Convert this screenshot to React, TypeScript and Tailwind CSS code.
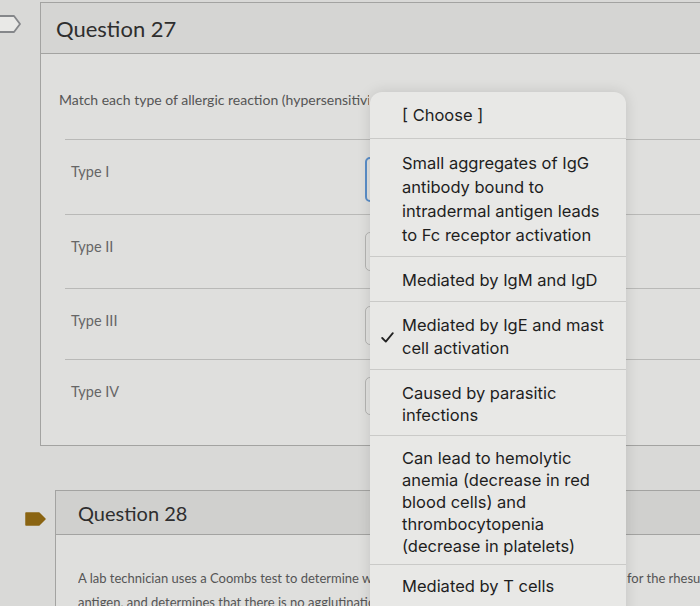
const rows = [
  { label: 'Type I', row: 'h-[75px] border-b', sel: 'h-[45px] border-2 border-[#5a8ec8]' },
  { label: 'Type II', row: 'h-[74px] border-b', sel: 'h-[39px] border border-[#b4b4b2]' },
  { label: 'Type III', row: 'h-[71px] border-b', sel: 'h-[39px] border border-[#b4b4b2]' },
  { label: 'Type IV', row: 'h-[85px]', sel: 'h-[38px] border border-[#b4b4b2]' },
]

const options = [
  { lines: ['[ Choose ]'], cls: 'pt-[12px] pb-[11px] leading-[23px] border-b' },
  {
    lines: ['Small aggregates of IgG', 'antibody bound to', 'intradermal antigen leads', 'to Fc receptor activation'],
    cls: 'pt-[12px] pb-[9px] leading-[24px] border-b',
  },
  { lines: ['Mediated by IgM and IgD'], cls: 'pt-[12px] pb-[9px] leading-[23px] border-b' },
  { lines: ['Mediated by IgE and mast', 'cell activation'], cls: 'pt-[12px] pb-[9px] leading-[23px] border-b', checked: true },
  { lines: ['Caused by parasitic', 'infections'], cls: 'pt-[12px] pb-[9px] leading-[22px] border-b' },
  {
    lines: ['Can lead to hemolytic', 'anemia (decrease in red', 'blood cells) and', 'thrombocytopenia', '(decrease in platelets)'],
    cls: 'pt-[11px] pb-[7px] leading-[22px] border-b',
  },
  { lines: ['Mediated by T cells'], cls: 'pt-[10px] pb-[10px] leading-[22px]' },
]

function Check() {
  return (
    <svg width="13" height="11" viewBox="0 0 13 11">
      <path d="M1.2 6 L4.8 9.6 L11.8 1.2" fill="none" stroke="#222" strokeWidth="1.8" strokeLinecap="round" strokeLinejoin="round" />
    </svg>
  )
}

export default function App() {
  return (
    <div className="relative w-[700px] h-[606px] overflow-hidden bg-[#d9d9d7] font-['Lato',sans-serif]">
      {/* question 27 */}
      <div className="flex pt-[2px]">
        <div className="w-[40px] shrink-0 pt-[12px]">
          <svg width="22" height="20" viewBox="0 0 22 20">
            <path d="M-3 2 H14 L20 10 L14 18 H-3" fill="#e9e9e7" stroke="#85878a" strokeWidth="1.8" strokeLinejoin="round" />
          </svg>
        </div>
        <div className="flex-1 border-l border-t border-b border-[#a3a3a1] bg-[#dfdfdd]">
          <div className="h-[51px] flex items-center pl-[15px] text-[22px] text-[#2e2e2e] bg-[#d5d5d3] border-b border-[#a3a3a1]">
            Question 27
          </div>
          <div className="pt-[36px] pl-[18px]">
            <p className="w-[310px] overflow-hidden text-[14px] leading-[20px] text-[#555] whitespace-nowrap">
              Match each type of allergic reaction (hypersensitivity) with its description.
            </p>
            <div className="mt-[29px] ml-[6px] border-t border-[#b9b9b7]">
              {rows.map(r => (
                <div key={r.label} className={`flex items-start pt-[17px] border-[#b9b9b7] ${r.row}`}>
                  <div className="w-[300px] pl-[6px] pt-[5px] text-[14.5px] leading-[20px] text-[#666]">{r.label}</div>
                  <div className={`w-[250px] rounded-[5px] bg-[#e2e2e0] ${r.sel}`} />
                </div>
              ))}
            </div>
          </div>
        </div>
      </div>

      {/* question 28 */}
      <div className="flex mt-[44px]">
        <div className="w-[55px] shrink-0 pt-[22px] pl-[25px]">
          <svg width="21" height="14" viewBox="0 0 21 14">
            <path d="M1 1 H14 L20 7 L14 13 H1 Z" fill="#8a6412" stroke="#8a6412" strokeWidth="1.5" strokeLinejoin="round" />
          </svg>
        </div>
        <div className="flex-1 border-l border-t border-[#a3a3a1] bg-[#dfdfdd]">
          <div className="h-[44px] flex items-center pl-[22px] text-[20px] text-[#2e2e2e] bg-[#d0d0ce] border-b border-[#a3a3a1]">
            Question 28
          </div>
          <div className="pt-[31px] pl-[22px] text-[13px] leading-[24px] text-[#555]">
            <div className="flex whitespace-nowrap">
              <span className="w-[292px] overflow-hidden">A lab technician uses a Coombs test to determine whether</span>
              <span className="ml-[257px]">for the rhesus (Rh) factor</span>
            </div>
            <div className="w-[292px] overflow-hidden whitespace-nowrap">
              antigen, and determines that there is no agglutination of the cells.
            </div>
          </div>
        </div>
      </div>

      {/* open select menu */}
      <div className="absolute left-[370px] top-[92px] w-[256px] h-[540px] rounded-t-[12px] bg-[#e8e8e6] shadow-[0_0_14px_rgba(0,0,0,0.13)] font-['Inter',sans-serif] text-[16.5px] text-[#1e1e1e]">
        {options.map((o, i) => (
          <div key={i} className={`flex items-center border-[#cacac8] ${o.cls}`}>
            <div className="w-[32px] shrink-0 flex justify-center pl-[2px]">{o.checked && <Check />}</div>
            <div>
              {o.lines.map(l => (
                <div key={l} className="whitespace-nowrap">{l}</div>
              ))}
            </div>
          </div>
        ))}
      </div>
    </div>
  )
}
